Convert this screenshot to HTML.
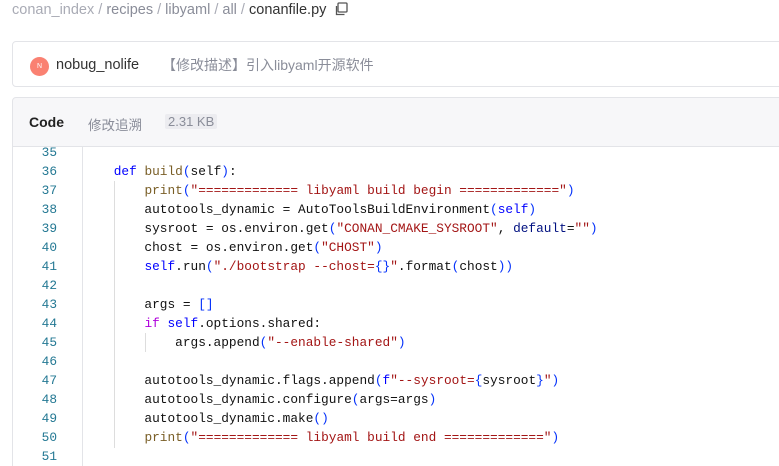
<!DOCTYPE html>
<html><head><meta charset="utf-8"><style>
body{margin:0;width:779px;height:465px;overflow:hidden;background:#fff;font-family:"Liberation Sans","Noto Sans CJK SC",sans-serif;position:relative}
.bc{position:absolute;left:12px;top:0;font-size:14.5px;color:#a9abb5;line-height:20px}
.bc b{font-weight:normal;color:#8a8d99}.bc i{font-style:normal;color:#333}
.commit{position:absolute;left:12px;top:41px;width:800px;height:46px;border:1px solid #e3e4e8;border-radius:4px;box-sizing:border-box}
.av{position:absolute;left:17px;top:15px;width:19px;height:19px;border-radius:50%;background:#fa8172;color:#fff;font-size:7px;text-align:center;line-height:19px}
.user{position:absolute;left:43px;top:15px;font-size:14.5px;color:#333}
.msg{position:absolute;left:149px;top:13px;font-size:14px;color:#8a8d99}
.hdr{position:absolute;left:12px;top:97px;width:800px;height:50px;border:1px solid #e3e4e8;border-radius:4px 4px 0 0;background:#f7f7f9;box-sizing:border-box}
.hdr .c{position:absolute;left:16px;top:16px;font-size:14px;font-weight:bold;color:#222}
.hdr .t{position:absolute;left:75px;top:16px;font-size:13.5px;color:#8a8d99}
.hdr .s{position:absolute;left:152px;top:16px;font-size:13px;color:#8a8d99;background:#ececf0;padding:0 3px;border-radius:2px}
.code{position:absolute;left:12px;top:146px;width:800px;height:320px;border-left:1px solid #e3e4e8;overflow:hidden}
.gut{position:absolute;left:0;top:0;width:69px;height:330px;border-right:1px solid #e3e4e8}
.ln{position:absolute;left:0;top:-3px;width:44px;text-align:right;font-family:"Liberation Mono",monospace;font-size:12.8px;line-height:19px;color:#237893;white-space:pre}
pre{position:absolute;left:70px;top:-3px;margin:0;font-family:"Liberation Mono",monospace;font-size:12.8px;line-height:19px;color:#111}
.g1{position:absolute;left:101px;top:35px;width:1px;height:267px;background:#ddd}
.g2{position:absolute;left:132px;top:187px;width:1px;height:19px;background:#ddd}
.k{color:#0000ff}.f{color:#795e26}.s1{color:#a31515}.p{color:#0431fa}.i{color:#af00db}.v{color:#001080}
</style></head><body>
<div class="bc">conan_index / <b>recipes</b> / <b>libyaml</b> / <b>all</b> / <i>conanfile.py</i>
<svg style="position:relative;top:2px;left:4px" width="14" height="14" viewBox="0 0 14 14" fill="none" stroke="#555" stroke-width="1.3"><rect x="4" y="1" width="9" height="9" rx="1"/><path d="M2.5 4v8.5h8"/></svg></div>
<div class="commit"><div class="av">N</div><div class="user">nobug_nolife</div><div class="msg">【修改描述】引入libyaml开源软件</div></div>
<div class="hdr"><div class="c">Code</div><div class="t">修改追溯</div><div class="s">2.31 KB</div></div>
<div class="code"><div class="gut"><div class="ln">35
36
37
38
39
40
41
42
43
44
45
46
47
48
49
50
51</div></div>
<div class="g1"></div><div class="g2"></div>
<pre>

    <span class="k">def</span> <span class="f">build</span><span class="p">(</span>self<span class="p">)</span>:
        <span class="f">print</span><span class="p">(</span><span class="s1">"============= libyaml build begin ============="</span><span class="p">)</span>
        autotools_dynamic = AutoToolsBuildEnvironment<span class="p">(</span><span class="k">self</span><span class="p">)</span>
        sysroot = os.environ.get<span class="p">(</span><span class="s1">"CONAN_CMAKE_SYSROOT"</span>, <span class="v">default</span>=<span class="s1">""</span><span class="p">)</span>
        chost = os.environ.get<span class="p">(</span><span class="s1">"CHOST"</span><span class="p">)</span>
        <span class="k">self</span>.run<span class="p">(</span><span class="s1">"./bootstrap --chost=</span><span class="p">{}</span><span class="s1">"</span>.format<span class="p">(</span>chost<span class="p">))</span>

        args = <span class="p">[]</span>
        <span class="i">if</span> <span class="k">self</span>.options.shared:
            args.append<span class="p">(</span><span class="s1">"--enable-shared"</span><span class="p">)</span>

        autotools_dynamic.flags.append<span class="p">(</span><span class="k">f</span><span class="s1">"--sysroot=</span><span class="p">{</span>sysroot<span class="p">}</span><span class="s1">"</span><span class="p">)</span>
        autotools_dynamic.configure<span class="p">(</span>args=args<span class="p">)</span>
        autotools_dynamic.make<span class="p">()</span>
        <span class="f">print</span><span class="p">(</span><span class="s1">"============= libyaml build end ============="</span><span class="p">)</span>
</pre></div>
</body></html>
